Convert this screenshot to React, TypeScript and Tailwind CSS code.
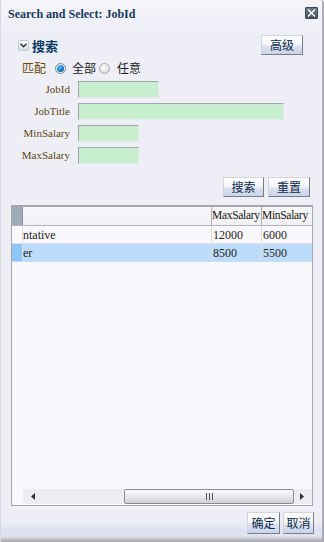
import React from "react";

const serif = { fontFamily: '"Liberation Serif", "Times New Roman", serif' };
const cjk = { fontFamily: '"Noto Sans CJK SC", "Noto Sans", sans-serif' };

function Btn({ label, w, h = 20 }: { label: string; w: number; h?: number }) {
  return (
    <div
      className="flex items-center justify-center border border-t-[#d4d4dc] border-l-[#d4d4dc] border-r-[#7c7c88] border-b-[#7c7c88] bg-[linear-gradient(to_bottom,#ffffff_0%,#f4f6fa_45%,#d9e0ee_60%,#c9d4ea_100%)] text-[12px] leading-none text-[#0d2a48]"
      style={{ ...cjk, width: w, height: h }}
    >
      {label}
    </div>
  );
}

function Field({ label, w }: { label: string; w: number }) {
  return (
    <div className="flex h-[17px] items-center">
      <div className="w-[69px] text-right text-[11px] leading-none text-[#5e4510]" style={serif}>
        {label}
      </div>
      <div
        className="ml-[8px] h-[17px] border border-t-[#a4a4ac] border-l-[#a4a4ac] border-r-[#e6e6ee] border-b-[#e6e6ee] bg-[#c8efcd]"
        style={{ width: w }}
      />
    </div>
  );
}

function Radio({ on }: { on: boolean }) {
  return on ? (
    <div className="flex h-[11px] w-[11px] items-center justify-center rounded-full border border-[#7a8a98] bg-[#eef2f6]">
      <div className="h-[7px] w-[7px] rounded-full bg-[radial-gradient(circle_at_40%_35%,#6fc0f0_0%,#1878c0_55%,#0b3c70_100%)]" />
    </div>
  ) : (
    <div className="h-[11px] w-[11px] rounded-full border border-[#a8a8b0] bg-[radial-gradient(circle_at_40%_35%,#ffffff_0%,#e4e4e8_60%,#c4c4cc_100%)]" />
  );
}

export default function App() {
  return (
    <div
      className="flex h-[542px] w-[324px] flex-col rounded-tr-[3px] border-l border-r-2 border-l-[#d8d8e2] border-r-[#aeaeba] bg-[linear-gradient(to_bottom,#f4f4f9_0px,#eeeef7_30px,#eeeef7_521px,#e6e8f3_526px,#dbe1f1_531px,#e2e4ee_536px,#c4c4cc_539px,#a4a4ae_542px)]"
    >
      {/* title bar */}
      <div className="flex h-[35px] items-start justify-between pl-[7px] pr-[4px] pt-[7px]">
        <div className="text-[12px] font-bold leading-[14px] text-[#163a5e]" style={serif}>
          Search and Select: JobId
        </div>
        <div className="flex h-[12px] w-[13px] items-center justify-center rounded-[1px] border border-[#3c4854] bg-[linear-gradient(to_bottom,#6c7a88,#48566a)]">
          <svg width="9" height="8" viewBox="0 0 9 8">
            <path d="M1 0.5 L8 7.5 M8 0.5 L1 7.5" stroke="#ffffff" strokeWidth="1.4" />
          </svg>
        </div>
      </div>

      {/* search header */}
      <div className="flex h-[20px] items-center justify-between pl-[17px] pr-[19px]">
        <div className="flex items-center">
          <div className="flex h-[11px] w-[11px] items-center justify-center rounded-[2px] border border-[#c4c8d0] bg-[linear-gradient(to_bottom,#ffffff,#dadee6)]">
            <svg width="7" height="5" viewBox="0 0 7 5">
              <path d="M0.5 0.8 L3.5 3.8 L6.5 0.8" stroke="#1c2c3c" strokeWidth="1.3" fill="none" />
            </svg>
          </div>
          <div className="ml-[3px] text-[13px] font-bold leading-none text-[#0c3a66]" style={cjk}>
            搜索
          </div>
        </div>
        <Btn label="高级" w={42} />
      </div>

      {/* match row */}
      <div className="mt-[5px] flex h-[16px] items-center pl-[21px]">
        <div className="text-[12px] leading-none text-[#6a4a04]" style={cjk}>
          匹配
        </div>
        <div className="ml-[9px]">
          <Radio on />
        </div>
        <div className="ml-[6px] text-[12px] leading-none text-[#202020]" style={cjk}>
          全部
        </div>
        <div className="ml-[3px]">
          <Radio on={false} />
        </div>
        <div className="ml-[7px] text-[12px] leading-none text-[#202020]" style={cjk}>
          任意
        </div>
      </div>

      {/* fields */}
      <div className="mt-[5px] flex flex-col gap-[5px]">
        <Field label="JobId" w={81} />
        <Field label="JobTitle" w={206} />
        <Field label="MinSalary" w={61} />
        <Field label="MaxSalary" w={61} />
      </div>

      {/* search / reset */}
      <div className="mt-[13px] flex h-[20px] justify-end gap-[4px] pr-[12px]">
        <Btn label="搜索" w={41} />
        <Btn label="重置" w={42} />
      </div>

      {/* table */}
      <div className="ml-[10px] mt-[8px] flex h-[301px] w-[302px] flex-col border border-t-2 border-[#a6a6ae] bg-[#f7f7fc]">
        <div className="flex h-[19px] border-b border-[#b4b4bc]">
          <div className="w-[11px] border-r border-[#8894a2] bg-[#9eabb8]" />
          <div className="w-[189px] border-r border-[#b4b4bc] bg-[linear-gradient(to_bottom,#f8f8fc,#f0f0f6)]" />
          <div
            className="flex w-[50px] items-center overflow-hidden whitespace-nowrap border-r border-[#a8a8b0] bg-[linear-gradient(to_bottom,#f8f8fc,#f0f0f6)] text-[11.5px] leading-none tracking-[-0.3px] text-[#1c1408]"
            style={serif}
          >
            MaxSalary
          </div>
          <div
            className="flex w-[50px] items-center overflow-hidden whitespace-nowrap bg-[linear-gradient(to_bottom,#f8f8fc,#f0f0f6)] text-[11.5px] leading-none tracking-[-0.3px] text-[#1c1408]"
            style={serif}
          >
            MinSalary
          </div>
        </div>
        {[
          { t: "ntative", a: "12000", b: "6000", sel: false },
          { t: "er", a: "8500", b: "5500", sel: true },
        ].map((r, i) => (
          <div
            key={i}
            className={`flex h-[18px] border-b ${r.sel ? "border-[#c8def4] bg-[#bcdcfc]" : "border-[#e0e0ea] bg-[#f8f8fd]"}`}
            style={serif}
          >
            <div className={`w-[11px] border-r ${r.sel ? "border-[#d0e4f8] bg-[#8cc6fa]" : "border-[#e0e0ea] bg-[#fafafe]"}`} />
            <div className="flex w-[189px] items-center border-r border-[#dcdce6] text-[12px] leading-none text-[#2a2418]">
              {r.t}
            </div>
            <div className="flex w-[50px] items-center border-r border-[#dcdce6] pl-[1px] text-[12px] leading-none text-[#2a2418]">
              {r.a}
            </div>
            <div className="flex w-[50px] items-center pl-[1px] text-[12px] leading-none text-[#2a2418]">
              {r.b}
            </div>
          </div>
        ))}
        <div className="flex-1" />
        {/* horizontal scrollbar */}
        <div className="mb-[1px] ml-[11px] flex h-[15px] w-[289px] items-center bg-[#ededf1]">
          <div className="flex w-[20px] justify-center">
            <svg width="4" height="7" viewBox="0 0 4 7">
              <path d="M4 0 L0 3.5 L4 7 Z" fill="#303030" />
            </svg>
          </div>
          <div className="ml-[81px] flex h-[15px] w-[170px] items-center justify-center rounded-[2px] border border-[#8c8c96] bg-[linear-gradient(to_bottom,#fafafc,#e8e8ee_50%,#cfd0d8)]">
            <svg width="7" height="7" viewBox="0 0 7 7">
              <path d="M0.5 0 V7 M3.5 0 V7 M6.5 0 V7" stroke="#505058" strokeWidth="1" />
            </svg>
          </div>
          <div className="ml-[6px] flex w-[8px] justify-start">
            <svg width="4" height="7" viewBox="0 0 4 7">
              <path d="M0 0 L4 3.5 L0 7 Z" fill="#303030" />
            </svg>
          </div>
        </div>
      </div>

      {/* bottom buttons */}
      <div className="mt-[6px] flex h-[22px] justify-end gap-[3px] pr-[8px]">
        <Btn label="确定" w={33} h={22} />
        <Btn label="取消" w={31} h={22} />
      </div>
    </div>
  );
}
